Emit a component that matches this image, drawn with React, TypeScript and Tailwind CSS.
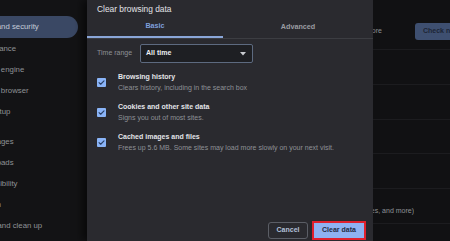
import React from "react"

const navTop = ["Privacy and security", "Appearance", "Search engine", "Default browser", "On startup"]
const navBottom = ["Languages", "Downloads", "Accessibility", "System", "Reset and clean up"]

const items = [
    { title: "Browsing history", sub: "Clears history, including in the search box" },
    { title: "Cookies and other site data", sub: "Signs you out of most sites." },
    { title: "Cached images and files", sub: "Frees up 5.6 MB. Some sites may load more slowly on your next visit." },
]

function Checkbox() {
    return (
        <div className="w-[9px] h-[9px] shrink-0 rounded-[1px] bg-[#8ab4f8] flex items-center justify-center">
            <svg width="7" height="7" viewBox="0 0 10 10" fill="none">
                <path d="M1.5 5.2l2.3 2.3L8.6 2.6" stroke="#2a3f66" strokeWidth="1.6" strokeLinecap="round" strokeLinejoin="round" />
            </svg>
        </div>
    )
}

export default function App() {
    return (
        <div className="relative w-[450px] h-[241px] overflow-hidden bg-[#111113] flex font-['Liberation_Sans',Arial,sans-serif]">
            {/* sidebar behind the dialog */}
            <div className="w-[87px] shrink-0 bg-[#131315] pt-[16px] flex flex-col overflow-hidden">
                {navTop.map((label, i) => (
                    <div
                        key={label}
                        className={
                            i === 0
                                ? "w-[78px] h-[22px] shrink-0 rounded-r-full bg-[#3a4864] flex items-center overflow-hidden"
                                : "w-[78px] h-[21px] shrink-0 flex items-center overflow-hidden"
                        }
                    >
                        <span
                            className={
                                i === 0
                                    ? "-ml-[31px] whitespace-nowrap text-[7.8px] text-[#c3cbd9]"
                                    : "-ml-[26px] whitespace-nowrap text-[7.8px] text-[#8f9296]"
                            }
                        >
                            {label}
                        </span>
                    </div>
                ))}
                <div className="h-[9px] shrink-0" />
                {navBottom.map((label) => (
                    <div key={label} className="w-[78px] h-[21px] shrink-0 flex items-center overflow-hidden">
                        <span className="-ml-[25px] whitespace-nowrap text-[7.8px] text-[#8f9296]">{label}</span>
                    </div>
                ))}
            </div>

            {/* settings content behind the dialog */}
            <div className="flex-1 flex flex-col">
                <div className="h-[49px] flex items-start pt-[23px]">
                    <div className="flex-1 h-[17px] flex items-center justify-end overflow-hidden">
                        <span className="whitespace-nowrap text-[7px] text-[#8f9296]">Chrome can help keep you safe from data breaches, bad extensions, and more</span>
                    </div>
                    <div className="w-[33px] shrink-0" />
                    <div className="h-[17px] w-[35px] shrink-0 rounded-l-[3px] bg-[#3e4f70] flex items-center overflow-hidden">
                        <span className="pl-[8px] whitespace-nowrap text-[7px] font-bold text-[#1d2535]">Check now</span>
                    </div>
                </div>
                <div className="h-[35px] border-t border-[#1c1c1f]" />
                <div className="h-[35px] border-t border-[#1c1c1f]" />
                <div className="h-[34px] border-t border-[#1c1c1f]" />
                <div className="h-[35px] border-t border-[#1c1c1f]" />
                <div className="h-[35px] border-t border-[#1c1c1f] flex items-end pb-[7px]">
                    <div className="w-[327px] flex justify-end overflow-hidden">
                        <span className="whitespace-nowrap text-[7px] text-[#8f9296]">Delete history, cookies, caches, and more)</span>
                    </div>
                </div>
                <div className="flex-1 border-t border-[#1c1c1f]" />
            </div>

            {/* Clear browsing data dialog */}
            <div className="absolute top-0 left-[87px] w-[286px] h-[241px] bg-[#2a2a2f] shadow-[-5px_0_8px_rgba(0,0,0,0.55)] flex flex-col">
                <div className="h-[17px] pl-[10px] pt-[3px] text-[8.4px] leading-[12px] text-[#e3e4e8]">Clear browsing data</div>

                <div className="flex h-[22px] border-b border-[#3c3d42]">
                    <div className="w-[136px] border-b-2 border-[#8aa6d8] flex items-center justify-center text-[7.2px] font-bold text-[#7d9fdc]">
                        Basic
                    </div>
                    <div className="flex-1 flex items-center justify-center text-[7.2px] font-bold text-[#9a9da2]">Advanced</div>
                </div>

                <div className="flex items-center mt-[5px] pl-[10px]">
                    <div className="w-[43px] text-[7px] text-[#8e9196]">Time range</div>
                    <div className="w-[113px] h-[19px] rounded-[2px] border border-[#5d6a80] bg-[#1e1f23] flex items-center justify-between pl-[5px] pr-[6px]">
                        <span className="text-[7px] font-bold text-[#eceef2]">All time</span>
                        <svg width="6" height="4" viewBox="0 0 6 4">
                            <path d="M0 0h6L3 3.5z" fill="#c9cbd0" />
                        </svg>
                    </div>
                </div>

                <div className="flex flex-col gap-[8px] mt-[8px]">
                    {items.map((it) => (
                        <div key={it.title} className="flex items-center pl-[10px] gap-[12px]">
                            <Checkbox />
                            <div className="flex flex-col">
                                <span className="text-[7px] leading-[11px] font-bold text-[#e3e4e8]">{it.title}</span>
                                <span className="text-[7px] leading-[11px] text-[#8e9196] whitespace-nowrap">{it.sub}</span>
                            </div>
                        </div>
                    ))}
                </div>

                <div className="mt-auto flex justify-end items-center gap-[4px] pr-[7px] pb-[1px]">
                    <div className="w-[40px] h-[17px] rounded-[3px] border border-[#5b5e66] flex items-center justify-center text-[7px] font-bold text-[#b2c0d8]">
                        Cancel
                    </div>
                    <div className="w-[54px] h-[19px] border-2 border-[#e0212e] bg-[#8fb2f2] flex items-center justify-center text-[7px] font-bold text-[#1f2a44]">
                        Clear data
                    </div>
                </div>
            </div>
        </div>
    )
}
